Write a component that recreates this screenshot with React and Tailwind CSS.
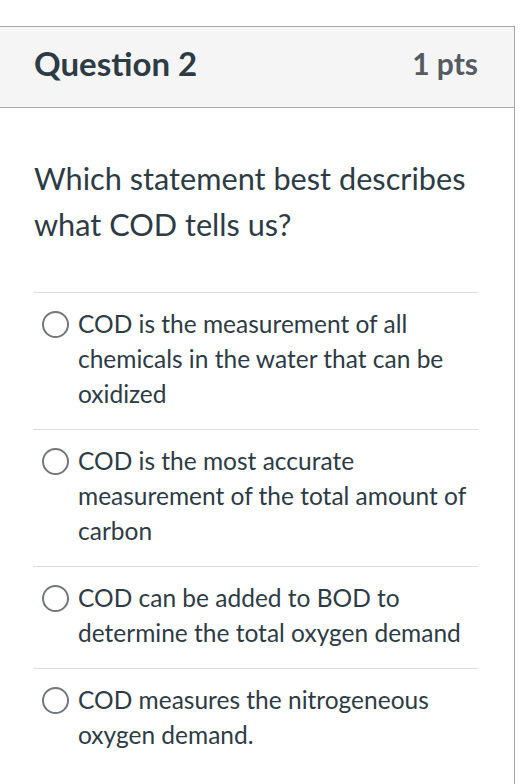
export default function App() {
  const answers = [
    "COD is the measurement of all chemicals in the water that can be oxidized",
    "COD is the most accurate measurement of the total amount of carbon",
    "COD can be added to BOD to determine the total oxygen demand",
    "COD measures the nitrogeneous oxygen demand.",
  ];
  return (
    <div className="bg-white min-h-[784px] pt-[26px]" style={{ fontFamily: "Lato, 'Noto Sans', sans-serif" }}>
      <div className="w-[515px] border-t border-r border-[#a8a8a8] min-h-[758px]">
        <div className="h-[81px] bg-[#f5f5f5] border-b border-[#a8a8a8] flex items-center justify-between pl-[34px] pr-[36px] pb-[8px]">
          <div className="text-[33px] font-bold text-[#2d3b45] leading-none">Question 2</div>
          <div className="text-[30px] font-bold text-[#555b60] leading-none">1 pts</div>
        </div>
        <div className="pl-[33px] pr-[36px]">
          <div className="pt-[48px] pb-[44px] pl-[1px] text-[30.7px] leading-[46px] text-[#2d3b45]">
            Which statement best describes what COD tells us?
          </div>
          {answers.map((a, i) => (
            <div key={i} className="border-t border-[#dcdfe2] pt-[13px] pb-[18px] flex">
              <div className="w-[45px] shrink-0 pl-[9px] pt-[5px]">
                <div className="w-[27px] h-[27px] rounded-full border-2 border-[#71777c]" />
              </div>
              <div className="text-[24.5px] leading-[35px] text-[#2d3b45] pr-[4px]">{a}</div>
            </div>
          ))}
        </div>
      </div>
    </div>
  );
}
